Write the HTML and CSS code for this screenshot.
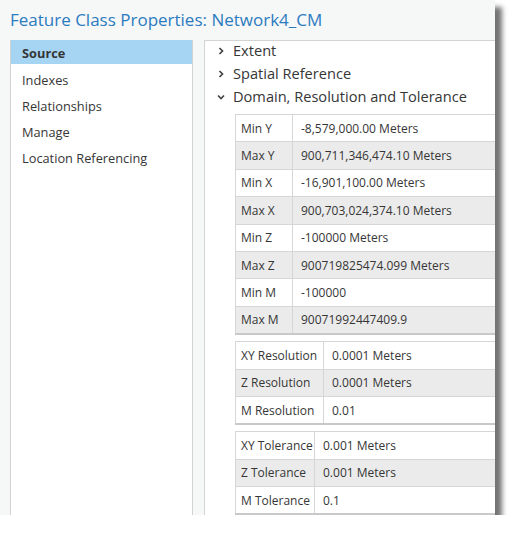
FILE: index.html
```html
<!DOCTYPE html>
<html>
<head>
<meta charset="utf-8">
<link rel="stylesheet" href="styles.css">
</head>
<body>
<div class="window">
  <div class="title">Feature Class Properties: Network4_CM</div>
  <div class="main">
    <ul class="nav">
      <li class="sel">Source</li>
      <li>Indexes</li>
      <li>Relationships</li>
      <li>Manage</li>
      <li>Location Referencing</li>
    </ul>
    <div class="pane">
      <div class="node"><svg class="chev" viewBox="0 0 8 8"><path d="M2.5 1 L5.5 4 L2.5 7"/></svg>Extent</div>
      <div class="node"><svg class="chev" viewBox="0 0 8 8"><path d="M2.5 1 L5.5 4 L2.5 7"/></svg>Spatial Reference</div>
      <div class="node"><svg class="chev" viewBox="0 0 8 8"><path d="M1 2.5 L4 5.5 L7 2.5"/></svg>Domain, Resolution and Tolerance</div>
      <table class="grid t1">
        <tr><td class="k">Min Y</td><td>-8,579,000.00 Meters</td></tr>
        <tr><td class="k">Max Y</td><td>900,711,346,474.10 Meters</td></tr>
        <tr><td class="k">Min X</td><td>-16,901,100.00 Meters</td></tr>
        <tr><td class="k">Max X</td><td>900,703,024,374.10 Meters</td></tr>
        <tr><td class="k">Min Z</td><td>-100000 Meters</td></tr>
        <tr><td class="k">Max Z</td><td>900719825474.099 Meters</td></tr>
        <tr><td class="k">Min M</td><td>-100000</td></tr>
        <tr><td class="k">Max M</td><td>90071992447409.9</td></tr>
      </table>
      <table class="grid t2">
        <tr><td class="k">XY Resolution</td><td>0.0001 Meters</td></tr>
        <tr><td class="k">Z Resolution</td><td>0.0001 Meters</td></tr>
        <tr><td class="k">M Resolution</td><td>0.01</td></tr>
      </table>
      <table class="grid t3">
        <tr><td class="k">XY Tolerance</td><td>0.001 Meters</td></tr>
        <tr><td class="k">Z Tolerance</td><td>0.001 Meters</td></tr>
        <tr><td class="k">M Tolerance</td><td>0.1</td></tr>
      </table>
    </div>
  </div>
</div>
</body>
</html>
```
FILE: styles.css
```css
html, body {
  margin: 0;
  padding: 0;
  background: #ffffff;
}
body {
  font-family: "Open Sans", "Noto Sans", sans-serif;
  color: #363636;
}
.window {
  width: 495px;
  height: 515px;
  background: #f6f7f7;
  box-shadow: 7px 7px 5px rgba(0, 0, 0, 0.55);
  overflow: hidden;
  display: flex;
  flex-direction: column;
}
.title {
  height: 40px;
  line-height: 40px;
  padding-left: 10px;
  font-size: 17px;
  color: #2b7bbf;
  white-space: nowrap;
}
.main {
  flex: 1;
  display: flex;
  gap: 11px;
  padding-left: 10px;
  min-height: 0;
}
.nav {
  list-style: none;
  margin: 0;
  padding: 0;
  width: 181px;
  flex: none;
  background: #ffffff;
  border: 1px solid #d3d3d3;
  border-top: none;
  border-bottom: none;
  font-size: 12.8px;
}
.nav li {
  height: 26px;
  line-height: 26px;
  padding-left: 11px;
  white-space: nowrap;
}
.nav li.sel {
  height: 24px;
  line-height: 26px;
  background: #a6d5f3;
  font-weight: bold;
  margin-bottom: 3px;
}
.pane {
  flex: none;
  width: 330px;
  background: #ffffff;
  border: 1px solid #d3d3d3;
  border-bottom: none;
  font-size: 12.5px;
}
.node {
  height: 23px;
  line-height: 23px;
  padding-left: 12px;
  font-size: 14.6px;
  white-space: nowrap;
  display: flex;
  align-items: center;
}
.node:first-child {
  margin-top: -2px;
}
.chev {
  width: 8px;
  height: 8px;
  margin-right: 8px;
  fill: none;
  stroke: #444444;
  stroke-width: 1.7;
}
.grid {
  border-collapse: collapse;
  margin-left: 30px;
  width: 300px;
  font-size: 12px;
  border-bottom: 2px solid #c9c9c9;
  white-space: nowrap;
}
.t1 { margin-top: 6px; }
.t2, .t3 { margin-top: 6px; }
.grid td {
  height: 26.4px;
  padding: 0 0 0 8px;
  border: 1px solid #d6d6d6;
  border-right: none;
}
.grid td.k {
  padding-left: 5px;
}
.grid tr:nth-child(even) td {
  background: #ebebeb;
}
.t1 td.k { width: 51px; }
.t2 td.k { width: 82px; }
.t3 td.k { width: 73px; }
```
